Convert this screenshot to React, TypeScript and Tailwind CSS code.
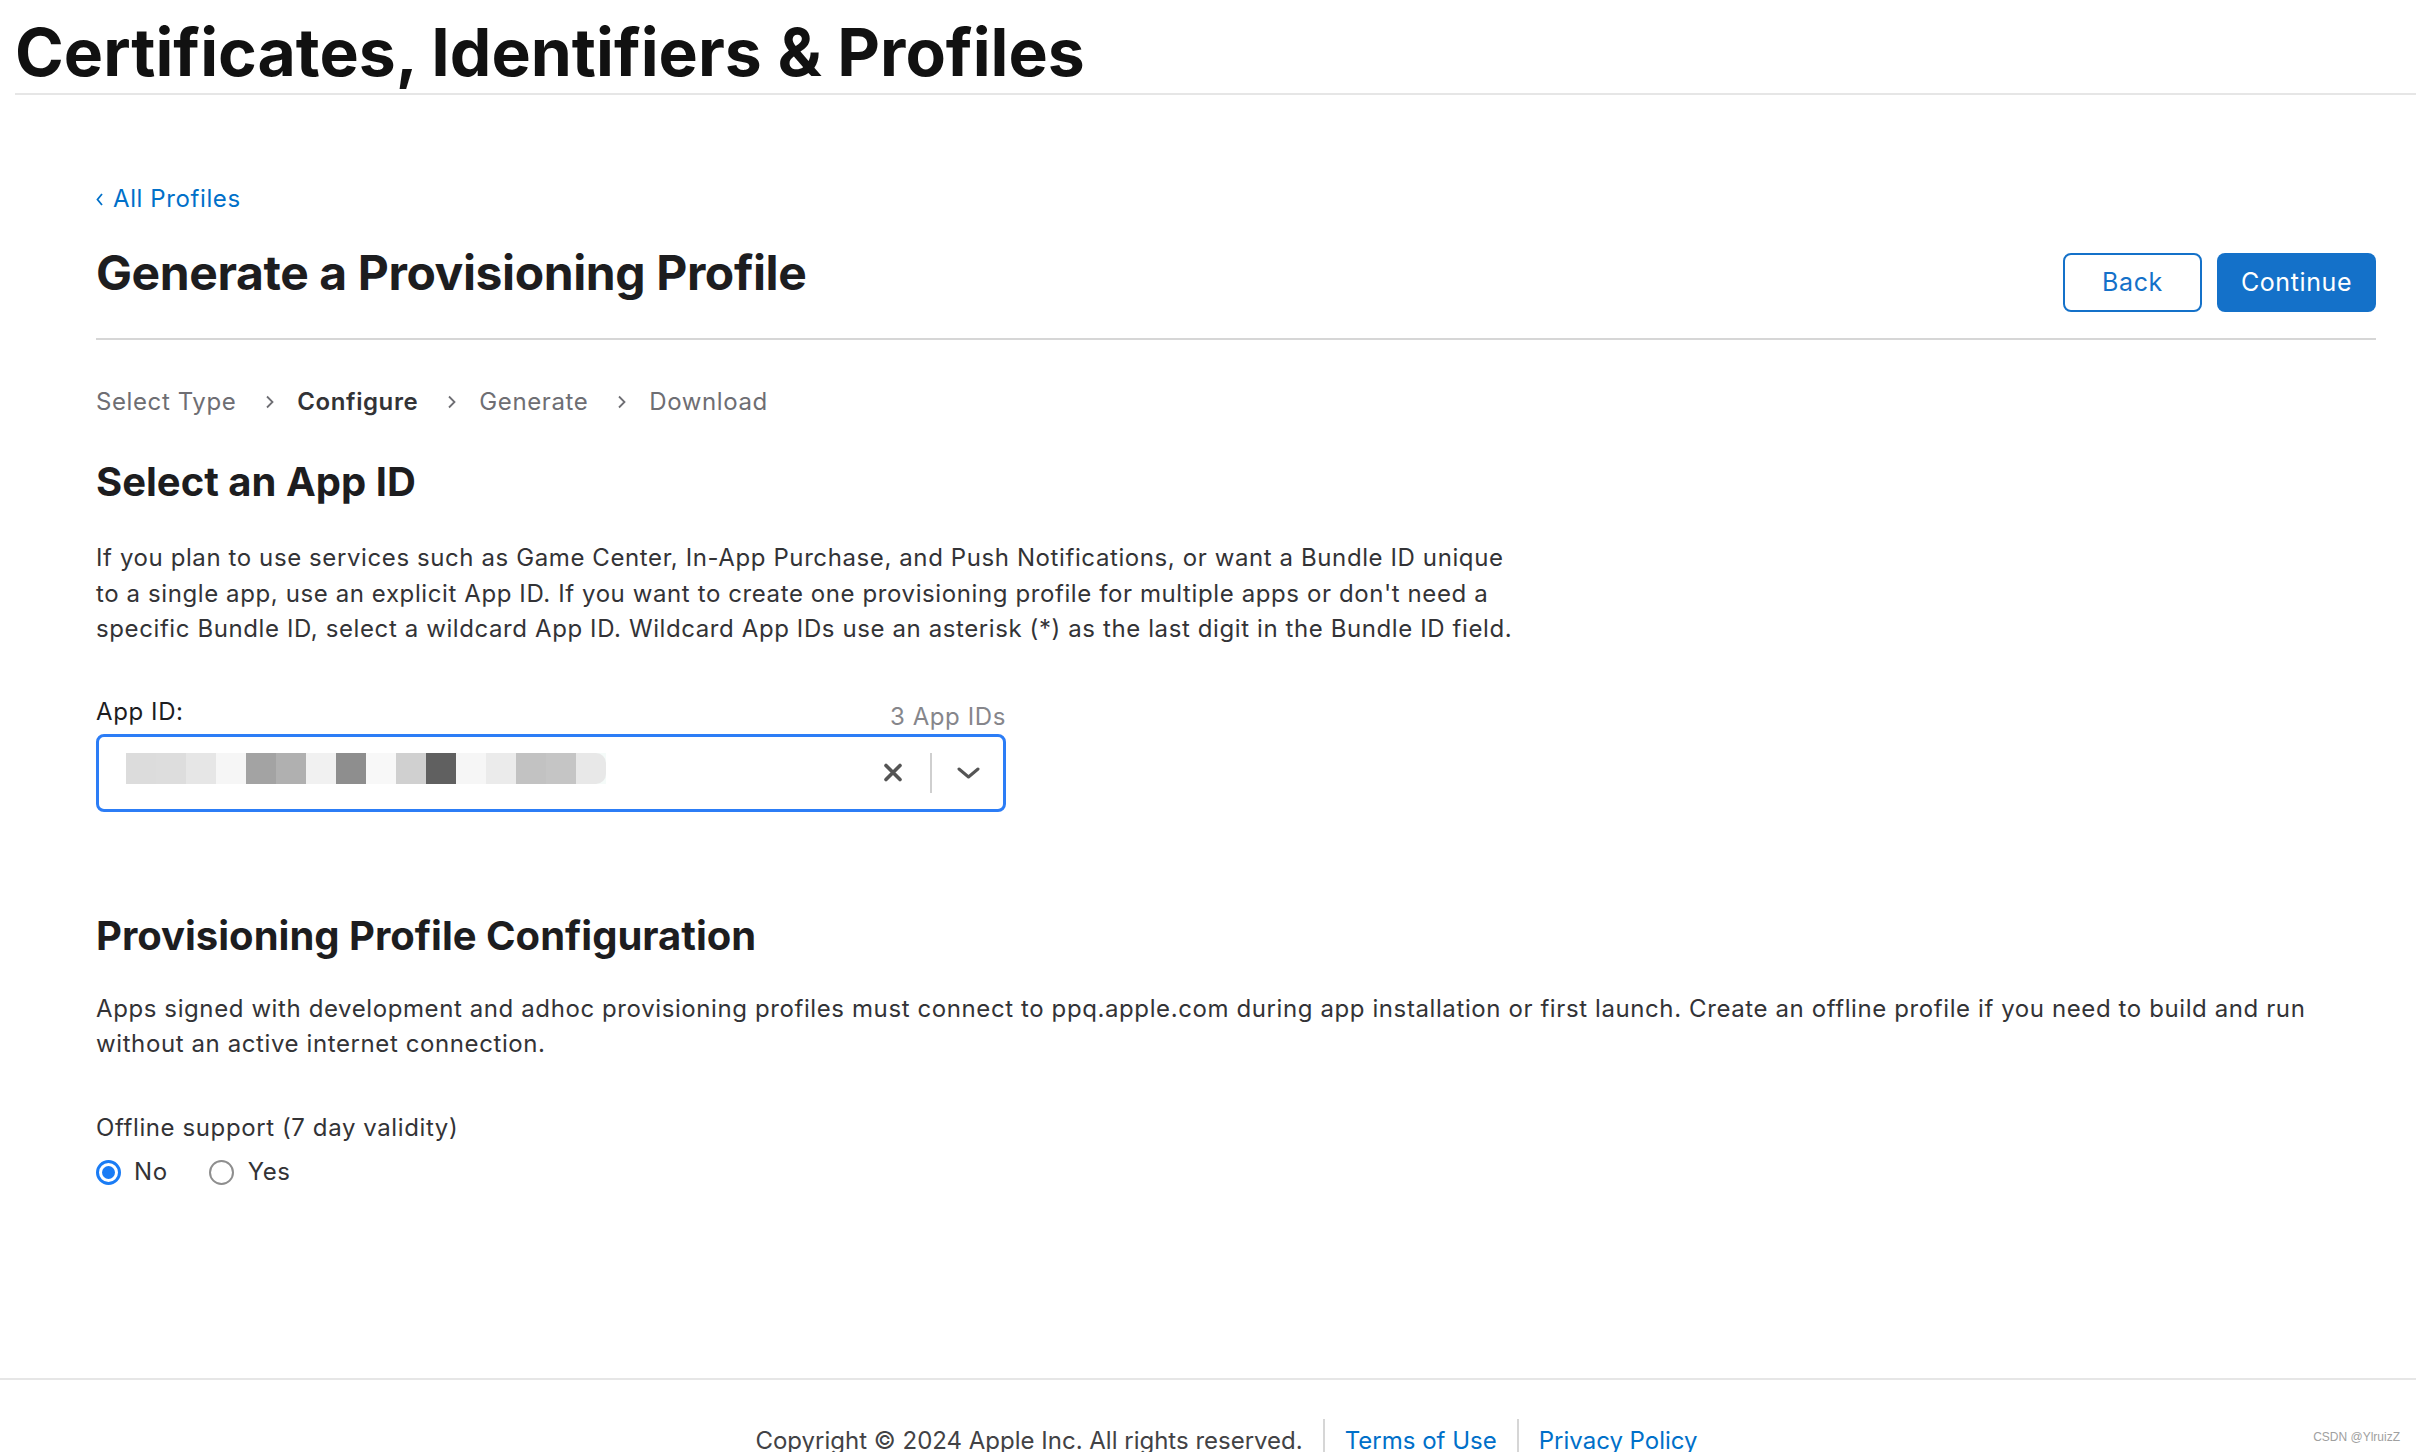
import React from "react";

const redaction = [
  "bg-[#dcdcdc]",
  "bg-[#dddddd]",
  "bg-[#e6e6e6]",
  "bg-[#f6f6f6]",
  "bg-[#a3a3a3]",
  "bg-[#b0b0b0]",
  "bg-[#f1f1f1]",
  "bg-[#8e8e8e]",
  "bg-[#f8f8f8]",
  "bg-[#d0d0d0]",
  "bg-[#606060]",
  "bg-[#f6f6f6]",
  "bg-[#ebebeb]",
  "bg-[#c2c2c2]",
  "bg-[#c5c5c5]",
  "bg-[#e8e8e8] rounded-r-[10px]",
];

function Chevron() {
  return (
    <svg width="9" height="14" viewBox="0 0 9 14" className="ml-[29px] mr-[23px]">
      <path d="M2 1.5 L7.5 7 L2 12.5" fill="none" stroke="#6e6e73" strokeWidth="1.8" />
    </svg>
  );
}

export default function App() {
  return (
    <div className="min-h-[1452px] bg-white font-['Inter',sans-serif] text-[#333336] tracking-[0.6px]">
      <header className="ml-[15px] pt-[20px] pb-[9px] border-b-2 border-[#e6e6e6]">
        <h1 className="text-[66px] leading-[64px] font-bold text-[#111] tracking-normal">
          Certificates, Identifiers &amp; Profiles
        </h1>
      </header>

      <main className="pl-[96px] pr-[40px]">
        <a className="mt-[92px] flex items-center gap-[10px] text-[24px] leading-[24px] text-[#0070c9]">
          <svg width="7" height="13" viewBox="0 0 7 13">
            <path d="M6 1 L1.5 6.5 L6 12" fill="none" stroke="#0070c9" strokeWidth="1.8" />
          </svg>
          All Profiles
        </a>

        <div className="mt-[38px] flex items-start justify-between pb-[26px] border-b-2 border-[#d6d6d6]">
          <h2 className="text-[48px] leading-[48px] font-bold text-[#1d1d1f] tracking-[-0.4px]">
            Generate a Provisioning Profile
          </h2>
          <div className="mt-[4px] flex gap-[15px]">
            <button className="h-[59px] w-[139px] rounded-[8px] border-2 border-[#1471c9] text-[25px] text-[#1471c9]">
              Back
            </button>
            <button className="h-[59px] w-[159px] rounded-[8px] bg-[#1471c9] text-[25px] text-white">
              Continue
            </button>
          </div>
        </div>

        <nav className="mt-[50px] flex items-center text-[24px] leading-[24px] text-[#6e6e73]">
          <span>Select Type</span>
          <Chevron />
          <span className="font-semibold text-[#333336]">Configure</span>
          <Chevron />
          <span>Generate</span>
          <Chevron />
          <span>Download</span>
        </nav>

        <h3 className="mt-[48px] text-[40px] leading-[40px] font-bold text-[#1d1d1f] tracking-normal">
          Select an App ID
        </h3>
        <p className="mt-[38px] text-[24px] leading-[35.5px]">
          If you plan to use services such as Game Center, In-App Purchase, and Push Notifications, or want a Bundle ID unique
          <br />
          to a single app, use an explicit App ID. If you want to create one provisioning profile for multiple apps or don't need a
          <br />
          specific Bundle ID, select a wildcard App ID. Wildcard App IDs use an asterisk (*) as the last digit in the Bundle ID field.
        </p>

        <div className="mt-[53px] w-[910px]">
          <div className="flex items-end justify-between text-[24px] leading-[24px]">
            <span className="pb-[5px] text-[#1d1d1f]">App ID:</span>
            <span className="text-[#86868b]">3 App IDs</span>
          </div>
          <div className="mt-[5px] h-[78px] flex items-center rounded-[8px] border-[3px] border-[#2c7df6] pl-[27px] pr-[23px]">
            <div className="flex mb-[8px] bg-[#f5fbf9]">
              {redaction.map((c, i) => (
                <div key={i} className={`h-[31px] w-[30px] ${c}`} />
              ))}
            </div>
            <div className="ml-auto flex items-center">
              <svg width="20" height="19" viewBox="0 0 20 19">
                <path d="M3 2.5 L17 16.5 M17 2.5 L3 16.5" stroke="#555" strokeWidth="3.6" strokeLinecap="round" />
              </svg>
              <div className="ml-[27px] mr-[25px] h-[40px] w-[2px] bg-[#cfcfcf]" />
              <svg width="23" height="12" viewBox="0 0 23 12">
                <path d="M2 2 L11.5 10 L21 2" fill="none" stroke="#555" strokeWidth="3" strokeLinecap="round" strokeLinejoin="round" />
              </svg>
            </div>
          </div>
        </div>

        <h3 className="mt-[104px] text-[40px] leading-[40px] font-bold text-[#1d1d1f] tracking-normal">
          Provisioning Profile Configuration
        </h3>
        <p className="mt-[35px] text-[24px] leading-[35.5px]">
          Apps signed with development and adhoc provisioning profiles must connect to ppq.apple.com during app installation or first launch. Create an offline profile if you need to build and run
          <br />
          without an active internet connection.
        </p>

        <div className="mt-[54px] text-[24px] leading-[24px] text-[#333336]">Offline support (7 day validity)</div>
        <div className="mt-[20px] flex items-center text-[24px] leading-[24px]">
          <span className="flex h-[25px] w-[25px] items-center justify-center rounded-full border-[3px] border-[#1a7cf5]">
            <span className="h-[13px] w-[13px] rounded-full bg-[#1a7cf5]" />
          </span>
          <span className="ml-[13px]">No</span>
          <span className="ml-[41px] h-[25px] w-[25px] rounded-full border-2 border-[#8e8e8e]" />
          <span className="ml-[14px]">Yes</span>
        </div>
      </main>

      <footer className="relative mt-[193px] border-t-2 border-[#e6e6e6] pt-[49px] pl-[37px] flex justify-center text-[24px] leading-[24px] tracking-normal">
        <span className="text-[#424245]">Copyright © 2024 Apple Inc. All rights reserved.</span>
        <span className="mx-[20px] -mt-[10px] h-[40px] w-[2px] bg-[#d6d6d6]" />
        <a className="text-[#0070c9]">Terms of Use</a>
        <span className="mx-[20px] -mt-[10px] h-[40px] w-[2px] bg-[#d6d6d6]" />
        <a className="text-[#0070c9]">Privacy Policy</a>
        <span className="absolute right-[16px] top-[50px] font-['Liberation_Sans',sans-serif] text-[12px] leading-[14px] text-[#a0a0a0]">
          CSDN @YlruizZ
        </span>
      </footer>
    </div>
  );
}
